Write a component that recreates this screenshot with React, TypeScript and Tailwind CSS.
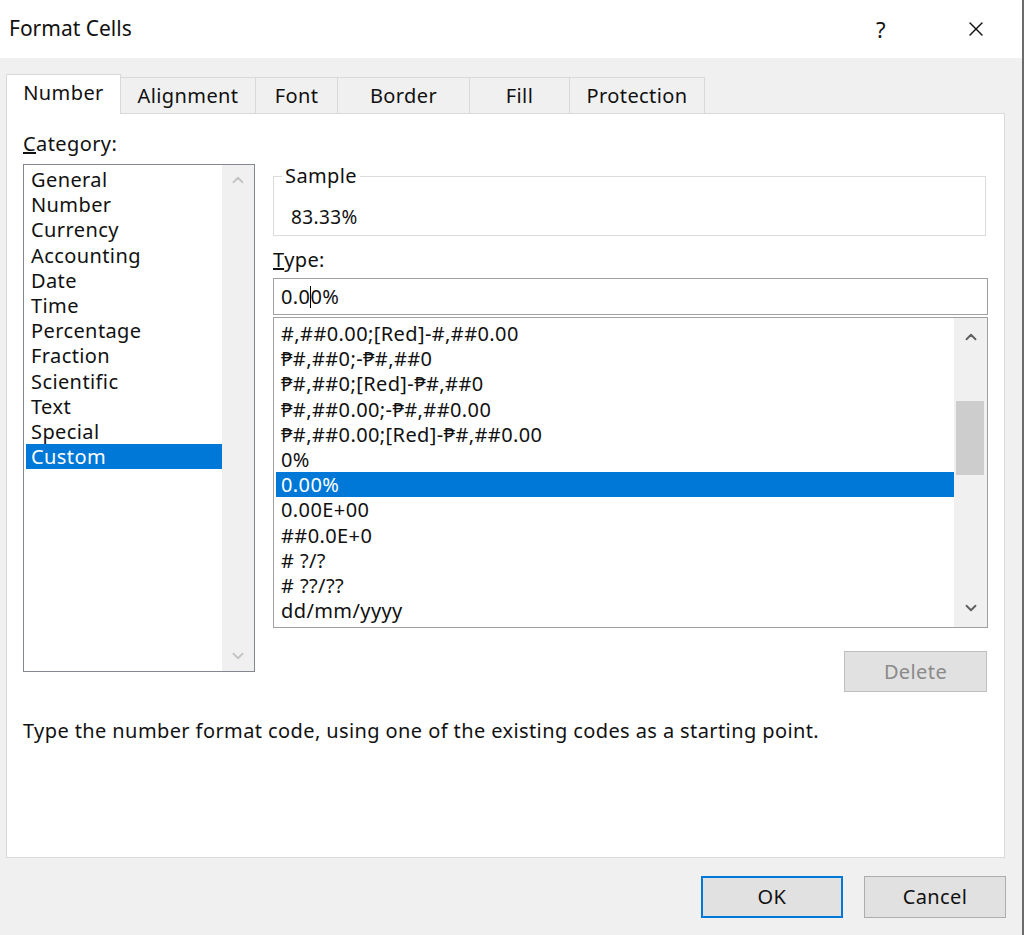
import { ChevronUp, ChevronDown, X } from "lucide-react";

const categories = [
  "General",
  "Number",
  "Currency",
  "Accounting",
  "Date",
  "Time",
  "Percentage",
  "Fraction",
  "Scientific",
  "Text",
  "Special",
  "Custom",
];

const types = [
  "#,##0.00;[Red]-#,##0.00",
  "₱#,##0;-₱#,##0",
  "₱#,##0;[Red]-₱#,##0",
  "₱#,##0.00;-₱#,##0.00",
  "₱#,##0.00;[Red]-₱#,##0.00",
  "0%",
  "0.00%",
  "0.00E+00",
  "##0.0E+0",
  "# ?/?",
  "# ??/??",
  "dd/mm/yyyy",
];

const tabs = ["Alignment", "Font", "Border", "Fill", "Protection"];
const tabWidths = ["w-[135px]", "w-[82px]", "w-[132px]", "w-[100px]", "w-[135px]"];

export default function App() {
  return (
    <div className="w-[1024px] h-[935px] bg-[#f0f0f0] border-r-2 border-[#6b6b6b] text-[#111] text-[20px] tracking-[0.4px] font-['Noto_Sans',sans-serif] flex flex-col overflow-hidden">
      {/* title bar */}
      <div className="h-[58px] bg-white flex items-center pl-[9px] shrink-0">
        <span className="text-[21px] tracking-normal">Format Cells</span>
        <span className="ml-auto mr-[78px] text-[22px]">?</span>
        <X className="w-[24px] h-[24px] mr-[34px]" strokeWidth={1.4} />
      </div>

      {/* tabs */}
      <div className="flex items-end pl-[6px] mt-[15px] h-[40px] shrink-0">
        <div className="w-[115px] h-[40px] bg-white border border-b-0 border-[#d9d9d9] flex items-center justify-center pb-[4px] relative z-10 -mb-px">
          Number
        </div>
        {tabs.map((t, i) => (
          <div
            key={t}
            className={`${tabWidths[i]} h-[36px] bg-[#f0f0f0] border border-l-0 border-b-0 border-[#d9d9d9] flex items-center justify-center`}
          >
            {t}
          </div>
        ))}
      </div>

      {/* panel */}
      <div className="ml-[6px] w-[999px] h-[745px] bg-white border border-[#d9d9d9] px-[16px] pt-[18px] relative">
        <div className="flex gap-[18px]">
          <div className="w-[236px]">
            <div className="leading-[24px] mb-[8px]">
              <span className="underline">C</span>ategory:
            </div>
            <div className="h-[508px] border border-[#828790] flex">
              <div className="flex-1 pt-[2px] pl-[2px]">
                {categories.map((c) => (
                  <div
                    key={c}
                    className={`h-[25.2px] leading-[25px] pl-[5px] ${c === "Custom" ? "bg-[#0078d7] text-white" : ""}`}
                  >
                    {c}
                  </div>
                ))}
              </div>
              <div className="w-[32px] bg-[#f0f0f0] flex flex-col justify-between items-center py-[6px]">
                <ChevronUp className="w-[18px] h-[18px] text-[#c4c4c4]" strokeWidth={2.5} />
                <ChevronDown className="w-[18px] h-[18px] text-[#c4c4c4]" strokeWidth={2.5} />
              </div>
            </div>
          </div>

          <div className="flex-1 pt-[44px]">
            <div className="border border-[#dcdcdc] h-[60px] w-[713px] relative pl-[17px] pt-[25px]">
              <span className="absolute -top-[13px] left-[8px] bg-white px-[3px] leading-[24px]">Sample</span>
              <span className="text-[19px]">83.33%</span>
            </div>
            <div className="mt-[12px] leading-[24px]">
              <span className="underline">T</span>ype:
            </div>
            <div className="mt-[6px] h-[37px] w-[715px] border border-[#a0a0a0] flex items-center pl-[7px]">
              0.0<span className="border-l border-black h-[22px] -mr-px"></span>0%
            </div>
            <div className="mt-[2px] h-[311px] w-[715px] border border-[#a0a0a0] flex">
              <div className="flex-1 pt-[3px] pl-[2px]">
                {types.map((t) => (
                  <div
                    key={t}
                    className={`h-[25.2px] leading-[25px] pl-[5px] text-[20px] ${t === "0.00%" ? "bg-[#0078d7] text-white" : ""}`}
                  >
                    {t}
                  </div>
                ))}
              </div>
              <div className="w-[33px] bg-[#f0f0f0] flex flex-col items-center py-[10px] relative">
                <ChevronUp className="w-[18px] h-[18px] text-[#606060]" strokeWidth={2.5} />
                <div className="absolute left-[2px] right-[3px] top-[83px] h-[74px] bg-[#cdcdcd]"></div>
                <ChevronDown className="w-[18px] h-[18px] text-[#606060] mt-auto" strokeWidth={2.5} />
              </div>
            </div>
            <div className="flex justify-end mt-[23px] pr-[1px]">
              <div className="w-[143px] h-[41px] bg-[#e1e1e1] border border-[#bfbfbf] flex items-center justify-center text-[#8a8a8a]">
                Delete
              </div>
            </div>
          </div>
        </div>
        <div className="mt-[24px]">Type the number format code, using one of the existing codes as a starting point.</div>
      </div>

      {/* buttons */}
      <div className="flex justify-end gap-[21px] pr-[16px] mt-[18px]">
        <div className="w-[142px] h-[42px] bg-[#e1e1e1] border-2 border-[#0078d7] flex items-center justify-center">OK</div>
        <div className="w-[142px] h-[42px] bg-[#e1e1e1] border border-[#adadad] flex items-center justify-center">Cancel</div>
      </div>
    </div>
  );
}
